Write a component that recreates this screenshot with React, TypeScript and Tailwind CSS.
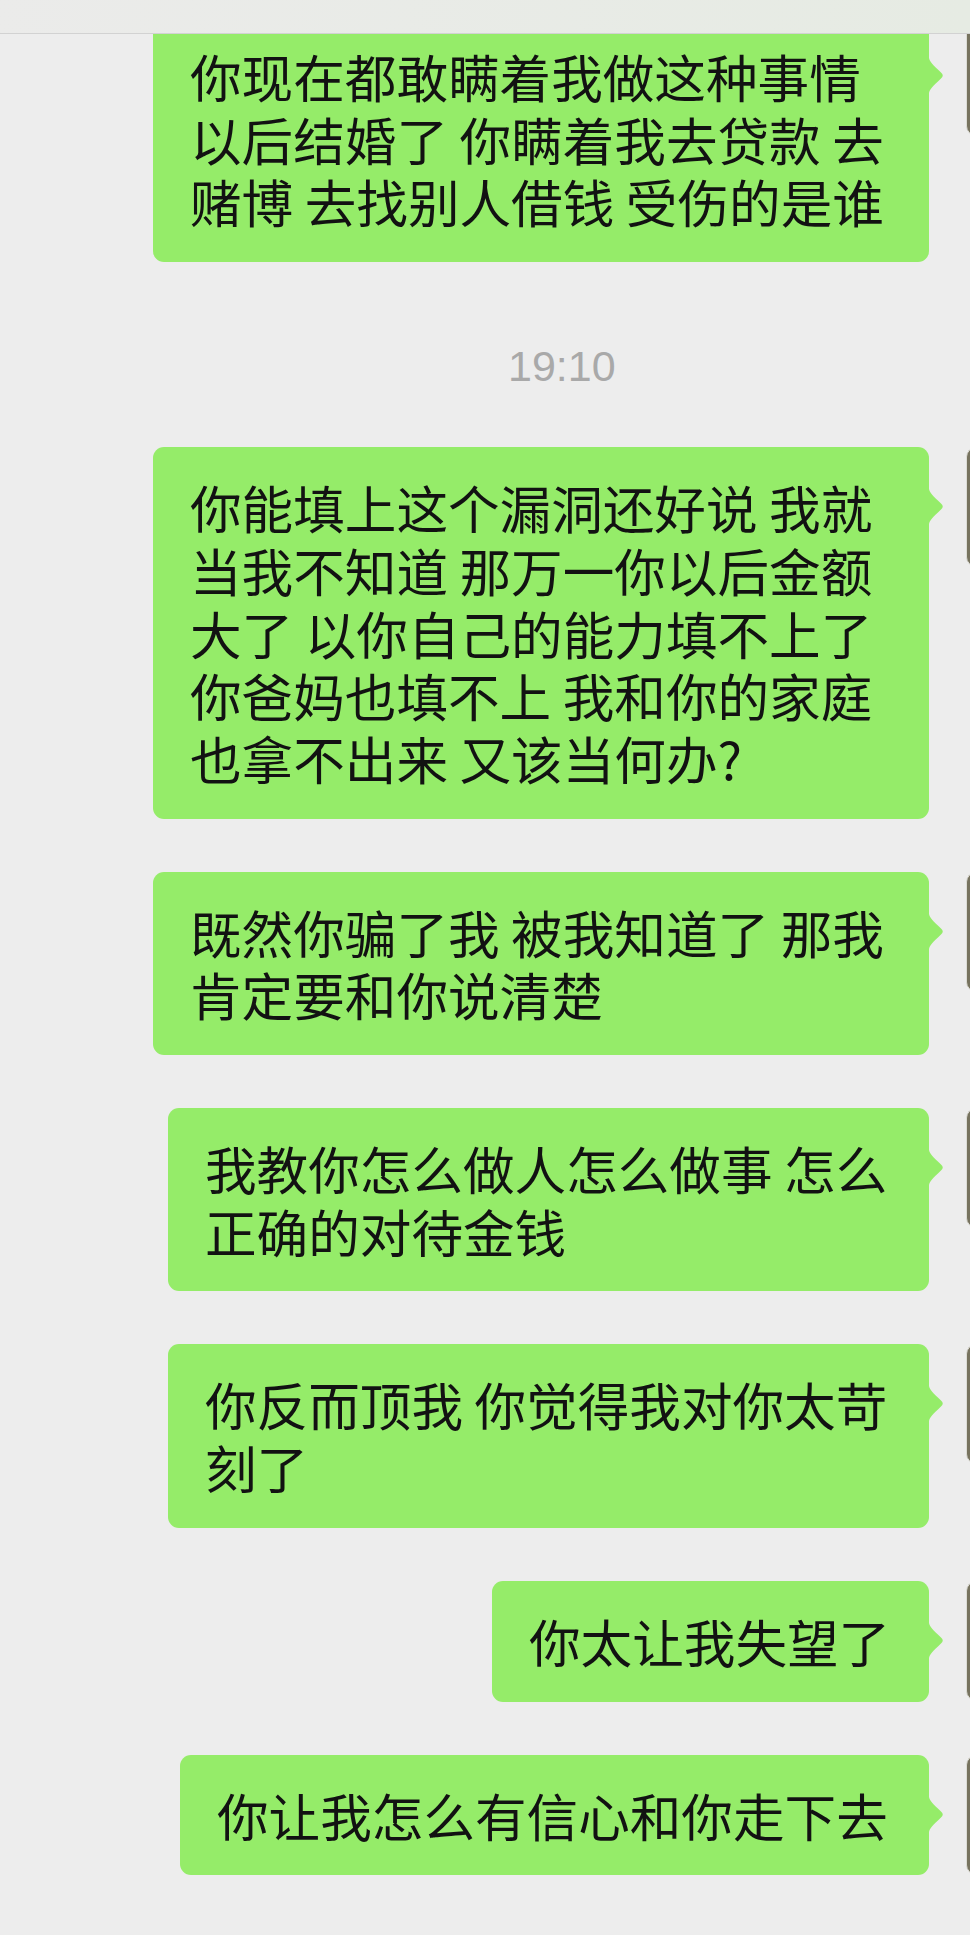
import React from 'react';

type Message = {
  lines: string[];
  width: string;
};

const firstMessage: Message = {
  lines: ['你现在都敢瞒着我做这种事情', '以后结婚了 你瞒着我去贷款 去', '赌博 去找别人借钱 受伤的是谁'],
  width: 'w-[776px]',
};

const laterMessages: Message[] = [
  {
    lines: [
      '你能填上这个漏洞还好说 我就',
      '当我不知道 那万一你以后金额',
      '大了 以你自己的能力填不上了',
      '你爸妈也填不上 我和你的家庭',
      '也拿不出来 又该当何办?',
    ],
    width: 'w-[776px]',
  },
  { lines: ['既然你骗了我 被我知道了 那我', '肯定要和你说清楚'], width: 'w-[776px]' },
  { lines: ['我教你怎么做人怎么做事 怎么', '正确的对待金钱'], width: 'w-[761px]' },
  { lines: ['你反而顶我 你觉得我对你太苛', '刻了'], width: 'w-[761px]' },
  { lines: ['你太让我失望了'], width: 'w-[437px]' },
  { lines: ['你让我怎么有信心和你走下去'], width: 'w-[749px]' },
];

// little pointer on the right edge of an outgoing bubble
function Tail() {
  return (
    <svg
      className="absolute left-full top-[42px]"
      width="16"
      height="35"
      viewBox="0 0 16 35"
      aria-hidden="true"
    >
      <path
        d="M0 0 C1 4 3 6 12 14.5 Q15.5 17.5 12 20.5 C3 29 1 31 0 35 Z"
        fill="#95ec69"
      />
    </svg>
  );
}

function Bubble({ message }: { message: Message }) {
  return (
    <div className="flex items-start gap-[37px]">
      <div
        className={`relative ${message.width} rounded-[11px] bg-[#95ec69] pl-[37px] pr-[20px] py-[29px] text-[51.6px] leading-[62.7px] text-[#121212] whitespace-pre`}
      >
        {message.lines.join('\n')}
        <Tail />
      </div>
      {/* avatar, mostly cut off by the screen edge */}
      <div className="h-[120px] w-[120px] shrink-0 rounded-[10px] border border-[#dcdcd6] bg-[#77735f]" />
    </div>
  );
}

export default function App() {
  return (
    <div className="relative h-[1935px] w-[970px] overflow-hidden bg-[#ededed] font-['Noto_Sans_CJK_SC','Noto_Sans',sans-serif]">
      {/* nav bar sits over the scrolled chat */}
      <div className="absolute left-0 top-0 z-10 h-[34px] w-full border-b border-[#d2d2d2] bg-gradient-to-r from-[#ebebea] to-[#e6ebe3]" />

      <div className="flex w-[1086px] flex-col items-end gap-[53px] pt-[16px]">
        <Bubble message={firstMessage} />

        <div className="h-[79px] self-start pl-[508px] pt-[26px] font-['Liberation_Sans',Arial,sans-serif] text-[43px] leading-[50px] text-[#a9a9a9]">
          19:10
        </div>

        {laterMessages.map((m, i) => (
          <Bubble key={i} message={m} />
        ))}
      </div>
    </div>
  );
}
